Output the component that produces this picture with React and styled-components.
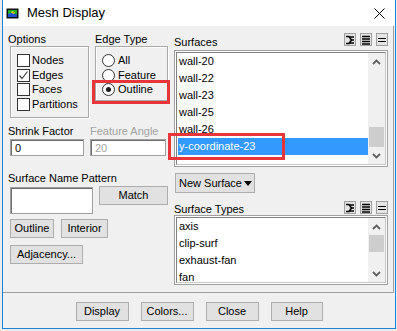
import React from 'react';
import styled, { createGlobalStyle } from 'styled-components';

const GlobalStyle = createGlobalStyle`
  html, body { margin: 0; padding: 0; }
  body {
    background: #ececec;
    font-family: "Liberation Sans", Arial, sans-serif;
    font-size: 11px;
    color: #000;
    overflow: hidden;
  }
  * { box-sizing: border-box; }
`;

const Screen = styled.div`
  width: 397px;
  height: 331px;
  padding-left: 2px;
  background: #ececec;
`;

const Window = styled.div`
  width: 394px;
  height: 329px;
  border: 1px solid #1883d7;
  border-top: none;
  display: flex;
  flex-direction: column;
  background: #f0f0f0;
`;

const TitleBar = styled.div`
  height: 26px;
  flex: none;
  background: #fff;
  display: flex;
  align-items: center;
`;

const AppIconBox = styled.svg`
  margin-left: 3px;
  width: 13px;
  height: 11px;
  margin-top: 1px;
`;

const Title = styled.div`
  margin-left: 8px;
  font-size: 13px;
  line-height: 16px;
  color: #000;
`;

const CloseGlyph = styled.svg`
  margin-left: auto;
  margin-right: 10px;
  width: 11px;
  height: 11px;
`;

const Body = styled.div`
  flex: 1;
  display: flex;
  flex-direction: column;
`;

const Panel = styled.div`
  width: 391px;
  height: 267px;
  border-right: 1px solid #a0a0a0;
  border-bottom: 1px solid #a0a0a0;
  padding: 7px 0 0 5px;
  display: flex;
  gap: 6px;
`;

const LeftCol = styled.div`
  width: 160px;
  display: flex;
  flex-direction: column;
`;

const RightCol = styled.div`
  width: 214px;
  display: flex;
  flex-direction: column;
`;

const GroupsRow = styled.div`
  display: flex;
  gap: 6px;
`;

const Group = styled.div`
  width: ${p => p.$w}px;
  display: flex;
  flex-direction: column;
`;

const Label = styled.div`
  height: 13px;
  line-height: 13px;
  white-space: nowrap;
  color: ${p => (p.$disabled ? '#a3a3a3' : '#000')};
`;

const GroupBox = styled.div`
  position: relative;
  margin-left: ${p => p.$ml || 0}px;
  width: ${p => p.$w}px;
  height: ${p => p.$h}px;
  border: 1px solid #a8a8a8;
  box-shadow: inset 1px 1px 0 #fff, 1px 1px 0 #fff;
  padding: 7px 0 0 ${p => p.$pl}px;
  display: flex;
  flex-direction: column;
`;

const OptionRow = styled.div`
  height: 14.7px;
  display: flex;
  align-items: flex-start;
  gap: ${p => p.$gap}px;
  line-height: 13px;
  white-space: nowrap;
`;

const CheckBox = styled.div`
  width: 13px;
  height: 13px;
  flex: none;
  border: 1px solid #333;
  background: #fff;
  display: flex;
  align-items: center;
  justify-content: center;
`;

const Radio = styled.div`
  width: 13px;
  height: 13px;
  flex: none;
  border-radius: 50%;
  border: 1px solid #333;
  background: #fff;
  display: flex;
  align-items: center;
  justify-content: center;
  &::after {
    content: '';
    display: ${p => (p.$on ? 'block' : 'none')};
    width: 5px;
    height: 5px;
    border-radius: 50%;
    background: #1a1a1a;
  }
`;

const RedMark = styled.div`
  position: absolute;
  left: ${p => p.$x}px;
  top: ${p => p.$y}px;
  width: ${p => p.$w}px;
  height: ${p => p.$h}px;
  border: 3px solid #e8353a;
  pointer-events: none;
`;

const FieldsRow = styled.div`
  display: flex;
  margin-top: 7px;
`;

const Field = styled.div`
  width: ${p => p.$w}px;
  display: flex;
  flex-direction: column;
`;

const TextInput = styled.div`
  margin-left: ${p => p.$ml || 0}px;
  margin-top: ${p => p.$mt || 0}px;
  width: ${p => p.$w}px;
  height: ${p => p.$h}px;
  border: 1px solid #a0a0a0;
  box-shadow: inset 1px 1px 0 #6e6e6e;
  background: #fff;
  padding: 2px 0 0 4px;
  line-height: 13px;
  color: ${p => (p.$disabled ? '#a3a3a3' : '#000')};
`;

const PatternLabel = styled(Label)`
  margin-top: 16px;
`;

const PatternRow = styled.div`
  display: flex;
  align-items: flex-start;
  margin-top: 1px;
`;

const Button = styled.div`
  width: ${p => p.$w}px;
  height: ${p => p.$h || 19}px;
  margin-left: ${p => p.$ml || 0}px;
  margin-top: ${p => p.$mt || 0}px;
  background: #e1e1e1;
  border: 1px solid #adadad;
  display: flex;
  align-items: center;
  justify-content: center;
  line-height: 13px;
  white-space: nowrap;
  flex: none;
`;

const ButtonRow = styled.div`
  display: flex;
  gap: 7px;
  margin-top: ${p => p.$mt}px;
  padding-left: 2px;
`;

const ListHeader = styled.div`
  height: ${p => p.$h}px;
  margin-top: ${p => p.$mt || 0}px;
  display: flex;
  align-items: flex-end;
  justify-content: space-between;
`;

const HeaderLabel = styled.div`
  line-height: 12px;
  margin-bottom: -1px;
`;

const IconBtns = styled.div`
  display: flex;
  gap: 4px;
  align-self: flex-start;
`;

const IconBtn = styled.div`
  width: 12px;
  height: 13px;
  border: 1px solid #a0a0a0;
  background: #e4e4e4;
  display: flex;
  align-items: center;
  justify-content: center;
`;

const ListWrap = styled.div`
  position: relative;
  margin-top: ${p => p.$mt}px;
`;

const ListFrame = styled.div`
  height: ${p => p.$h}px;
  border: 1px solid #a0a0a0;
  padding: 1px;
  background: #fff;
`;

const ListInner = styled.div`
  height: 100%;
  border-top: 1px solid #828282;
  border-left: 1px solid #828282;
  border-right: 1px solid #c8c8c8;
  border-bottom: 1px solid #c8c8c8;
  display: flex;
  overflow: hidden;
`;

const Items = styled.div`
  flex: 1;
  padding-left: 1px;
  overflow: hidden;
`;

const Item = styled.div`
  height: 17px;
  line-height: 17px;
  padding-left: 1px;
  white-space: nowrap;
  background: ${p => (p.$sel ? '#3399ff' : 'transparent')};
  color: ${p => (p.$sel ? '#fff' : '#000')};
`;

const ScrollBar = styled.div`
  width: 17px;
  flex: none;
  background: #f0f0f0;
  display: flex;
  flex-direction: column;
`;

const ScrollArrow = styled.div`
  height: 17px;
  flex: none;
  display: flex;
  align-items: center;
  justify-content: center;
`;

const ScrollTrack = styled.div`
  flex: 1;
  position: relative;
`;

const Thumb = styled.div`
  position: absolute;
  left: 1px;
  right: 1px;
  top: ${p => p.$top}px;
  height: ${p => p.$h}px;
  background: #cdcdcd;
`;

const DropButton = styled(Button)`
  justify-content: flex-start;
  padding-left: 3px;
  gap: 2px;
`;

const Footer = styled.div`
  flex: 1;
  display: flex;
  justify-content: center;
  gap: 12px;
  padding-top: 9px;
`;

const Check = () => (
  <svg width="11" height="11" viewBox="0 0 11 11">
    <path d="M1.5 5.5 L4 8.5 L9.5 1.5" fill="none" stroke="#444" strokeWidth="1.2" />
  </svg>
);

const Chevron = ({ down }) => (
  <svg width="9" height="6" viewBox="0 0 9 6">
    <path
      d={down ? 'M1 1 L4.5 4.5 L8 1' : 'M1 5 L4.5 1.5 L8 5'}
      fill="none"
      stroke="#606060"
      strokeWidth="1.8"
    />
  </svg>
);

const TreeIcon = () => (
  <svg width="10" height="10" viewBox="0 0 10 10">
    <path d="M1 1.5 H4 L6.5 5 L4 8.5 H1" fill="none" stroke="#000" strokeWidth="1.6" />
    <path d="M5 2 H9 M6.5 5 H9 M5 8 H9" stroke="#000" strokeWidth="1.4" />
  </svg>
);

const ListIcon = () => (
  <svg width="8" height="10" viewBox="0 0 8 10">
    <path d="M0 1.5 H8 M0 4 H8 M0 6.5 H8 M0 9 H8" stroke="#000" strokeWidth="1.6" />
  </svg>
);

const EqIcon = () => (
  <svg width="8" height="8" viewBox="0 0 8 8">
    <path d="M0 2.5 H8 M0 5.5 H8" stroke="#000" strokeWidth="1" />
  </svg>
);

const ListTools = () => (
  <IconBtns>
    <IconBtn><TreeIcon /></IconBtn>
    <IconBtn><ListIcon /></IconBtn>
    <IconBtn><EqIcon /></IconBtn>
  </IconBtns>
);

const ListBox = ({ h, items, selected, thumbTop, thumbH }) => (
  <ListFrame $h={h}>
    <ListInner>
      <Items>
        {items.map(it => (
          <Item key={it} $sel={it === selected}>{it}</Item>
        ))}
      </Items>
      <ScrollBar>
        <ScrollArrow><Chevron /></ScrollArrow>
        <ScrollTrack>
          <Thumb $top={thumbTop} $h={thumbH} />
        </ScrollTrack>
        <ScrollArrow><Chevron down /></ScrollArrow>
      </ScrollBar>
    </ListInner>
  </ListFrame>
);

const surfaces = ['wall-20', 'wall-22', 'wall-23', 'wall-25', 'wall-26', 'y-coordinate-23'];
const types = ['axis', 'clip-surf', 'exhaust-fan', 'fan'];

export default function App() {
  return (
    <>
      <GlobalStyle />
      <Screen>
        <Window>
          <TitleBar>
            <AppIconBox viewBox="0 0 13 11">
              <rect x="0.5" y="0.5" width="12" height="10" fill="#111" />
              <rect x="2" y="2" width="9" height="7" fill="#1d4fd0" />
              <path d="M2 2 H11 V6 C9 7 7 4 5 5 C4 6 3 5 2 6 Z" fill="#20b020" />
              <path d="M5 4 C6 3 8 3 9 5 C8 6 6 6 5 4 Z" fill="#e8e020" />
              <path d="M6.5 4.3 C7 4 7.8 4.2 8 4.8 C7.4 5.2 6.8 5 6.5 4.3 Z" fill="#e02020" />
            </AppIconBox>
            <Title>Mesh Display</Title>
            <CloseGlyph viewBox="0 0 11 11">
              <path d="M0.5 0.5 L10.5 10.5 M10.5 0.5 L0.5 10.5" stroke="#000" strokeWidth="1" />
            </CloseGlyph>
          </TitleBar>
          <Body>
            <Panel>
              <LeftCol>
                <GroupsRow>
                  <Group $w={81}>
                    <Label>Options</Label>
                    <GroupBox $ml={2} $w={79} $h={72} $pl={6}>
                      <OptionRow $gap={2}><CheckBox />Nodes</OptionRow>
                      <OptionRow $gap={2}><CheckBox><Check /></CheckBox>Edges</OptionRow>
                      <OptionRow $gap={2}><CheckBox />Faces</OptionRow>
                      <OptionRow $gap={2}><CheckBox />Partitions</OptionRow>
                    </GroupBox>
                  </Group>
                  <Group $w={73}>
                    <Label>Edge Type</Label>
                    <GroupBox $w={73} $h={55} $pl={6}>
                      <OptionRow $gap={3}><Radio />All</OptionRow>
                      <OptionRow $gap={3}><Radio />Feature</OptionRow>
                      <OptionRow $gap={3}><Radio $on />Outline</OptionRow>
                      <RedMark $x={-4} $y={33} $w={78} $h={24} />
                    </GroupBox>
                  </Group>
                </GroupsRow>
                <FieldsRow>
                  <Field $w={82}>
                    <Label>Shrink Factor</Label>
                    <TextInput $ml={2} $mt={1} $w={74} $h={17}>0</TextInput>
                  </Field>
                  <Field $w={76}>
                    <Label $disabled>Feature Angle</Label>
                    <TextInput $mt={1} $w={76} $h={17} $disabled>20</TextInput>
                  </Field>
                </FieldsRow>
                <PatternLabel>Surface Name Pattern</PatternLabel>
                <PatternRow>
                  <TextInput $ml={2} $mt={1} $w={83} $h={27} />
                  <Button $ml={6} $w={69}>Match</Button>
                </PatternRow>
                <ButtonRow $mt={5}>
                  <Button $w={44}>Outline</Button>
                  <Button $w={47}>Interior</Button>
                </ButtonRow>
                <ButtonRow $mt={7}>
                  <Button $w={73}>Adjacency...</Button>
                </ButtonRow>
              </LeftCol>
              <RightCol>
                <ListHeader $h={14}>
                  <HeaderLabel>Surfaces</HeaderLabel>
                  <ListTools />
                </ListHeader>
                <ListWrap $mt={3}>
                  <ListBox h={117} items={surfaces} selected="y-coordinate-23" thumbTop={57} thumbH={20} />
                  <RedMark $x={-6} $y={83} $w={117} $h={27} />
                </ListWrap>
                <DropButton $w={80} $h={20} $ml={1} $mt={6}>
                  New Surface
                  <svg width="8" height="5" viewBox="0 0 8 5">
                    <path d="M0 0 H8 L4 5 Z" fill="#000" />
                  </svg>
                </DropButton>
                <ListHeader $h={13} $mt={8}>
                  <HeaderLabel>Surface Types</HeaderLabel>
                  <ListTools />
                </ListHeader>
                <ListWrap $mt={1}>
                  <ListBox h={70} items={types} thumbTop={0} thumbH={17} />
                </ListWrap>
              </RightCol>
            </Panel>
            <Footer>
              <Button $w={53}>Display</Button>
              <Button $w={53}>Colors...</Button>
              <Button $w={53}>Close</Button>
              <Button $w={52}>Help</Button>
            </Footer>
          </Body>
        </Window>
      </Screen>
    </>
  );
}
